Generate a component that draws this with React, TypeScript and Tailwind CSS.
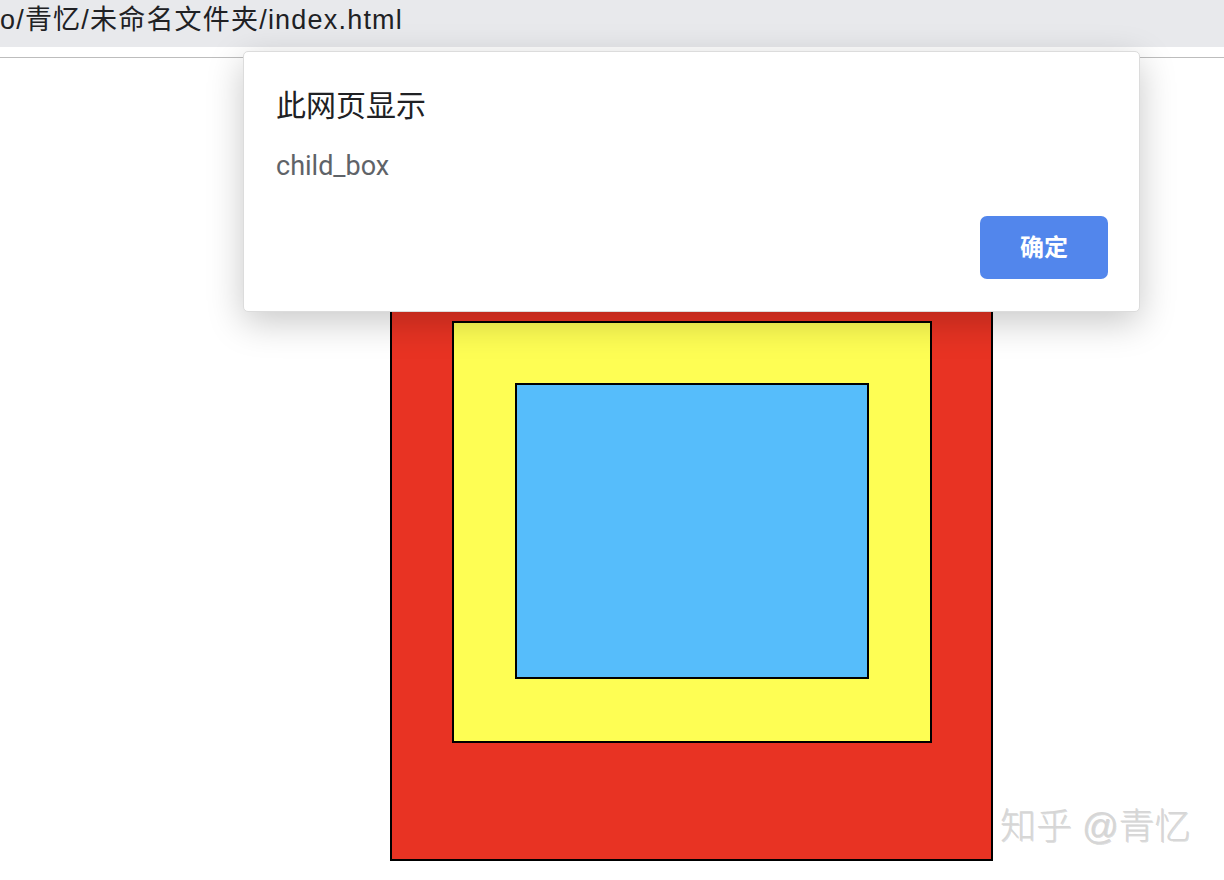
export default function App() {
  const font = "font-['Liberation_Sans','Noto_Sans_CJK_SC',sans-serif]";

  return (
    <div className={`relative w-[1224px] h-[880px] overflow-hidden bg-white ${font}`}>
      {/* address bar */}
      <div className="h-[47px] bg-[#e8e9ec] flex items-center overflow-hidden">
        <span className="whitespace-nowrap text-[27px] tracking-[1.2px] leading-none text-[#202124] mt-[-6px]">
          o/青忆/未命名文件夹/index.html
        </span>
      </div>
      <div className="h-[10px] bg-white" />
      <div className="h-px bg-[#bdbdbd]" />

      {/* page content */}
      <div className="pl-[390px] pt-[201px]">
        <div className="w-[603px] h-[602px] border-2 border-black bg-[#e83323] p-[60px]">
          <div className="w-[480px] h-[422px] border-2 border-black bg-[#fefe54] pl-[61px] pt-[60px]">
            <div className="w-[354px] h-[296px] border-2 border-black bg-[#56bdfb]" />
          </div>
        </div>
      </div>

      {/* alert dialog */}
      <div className="absolute left-[243px] top-[51px] w-[897px] h-[261px] rounded-[5px] bg-white border border-[#dcdcdc] shadow-[0_10px_36px_rgba(0,0,0,0.22)] flex flex-col pl-[32px] pr-[31px] pt-[36px] pb-[32px]">
        <div className="text-[30px] leading-[36px] text-[#202124]">此网页显示</div>
        <div className="mt-[26px] text-[27px] leading-[32px] text-[#5f6368] font-['Roboto','Noto_Sans_CJK_SC',sans-serif]">
          child_box
        </div>
        <div className="mt-auto flex justify-end">
          <button className="w-[128px] h-[63px] rounded-[7px] bg-[#5286ec] text-white text-[24px] font-bold flex items-center justify-center">
            确定
          </button>
        </div>
      </div>

      {/* watermark */}
      <div className="absolute left-[1000px] top-[804px] whitespace-nowrap text-[36px] leading-[46px] font-light text-[#d6d6d6] [text-shadow:1px_1px_0_rgba(0,0,0,0.15)]">
        知乎 @青忆
      </div>
    </div>
  );
}
